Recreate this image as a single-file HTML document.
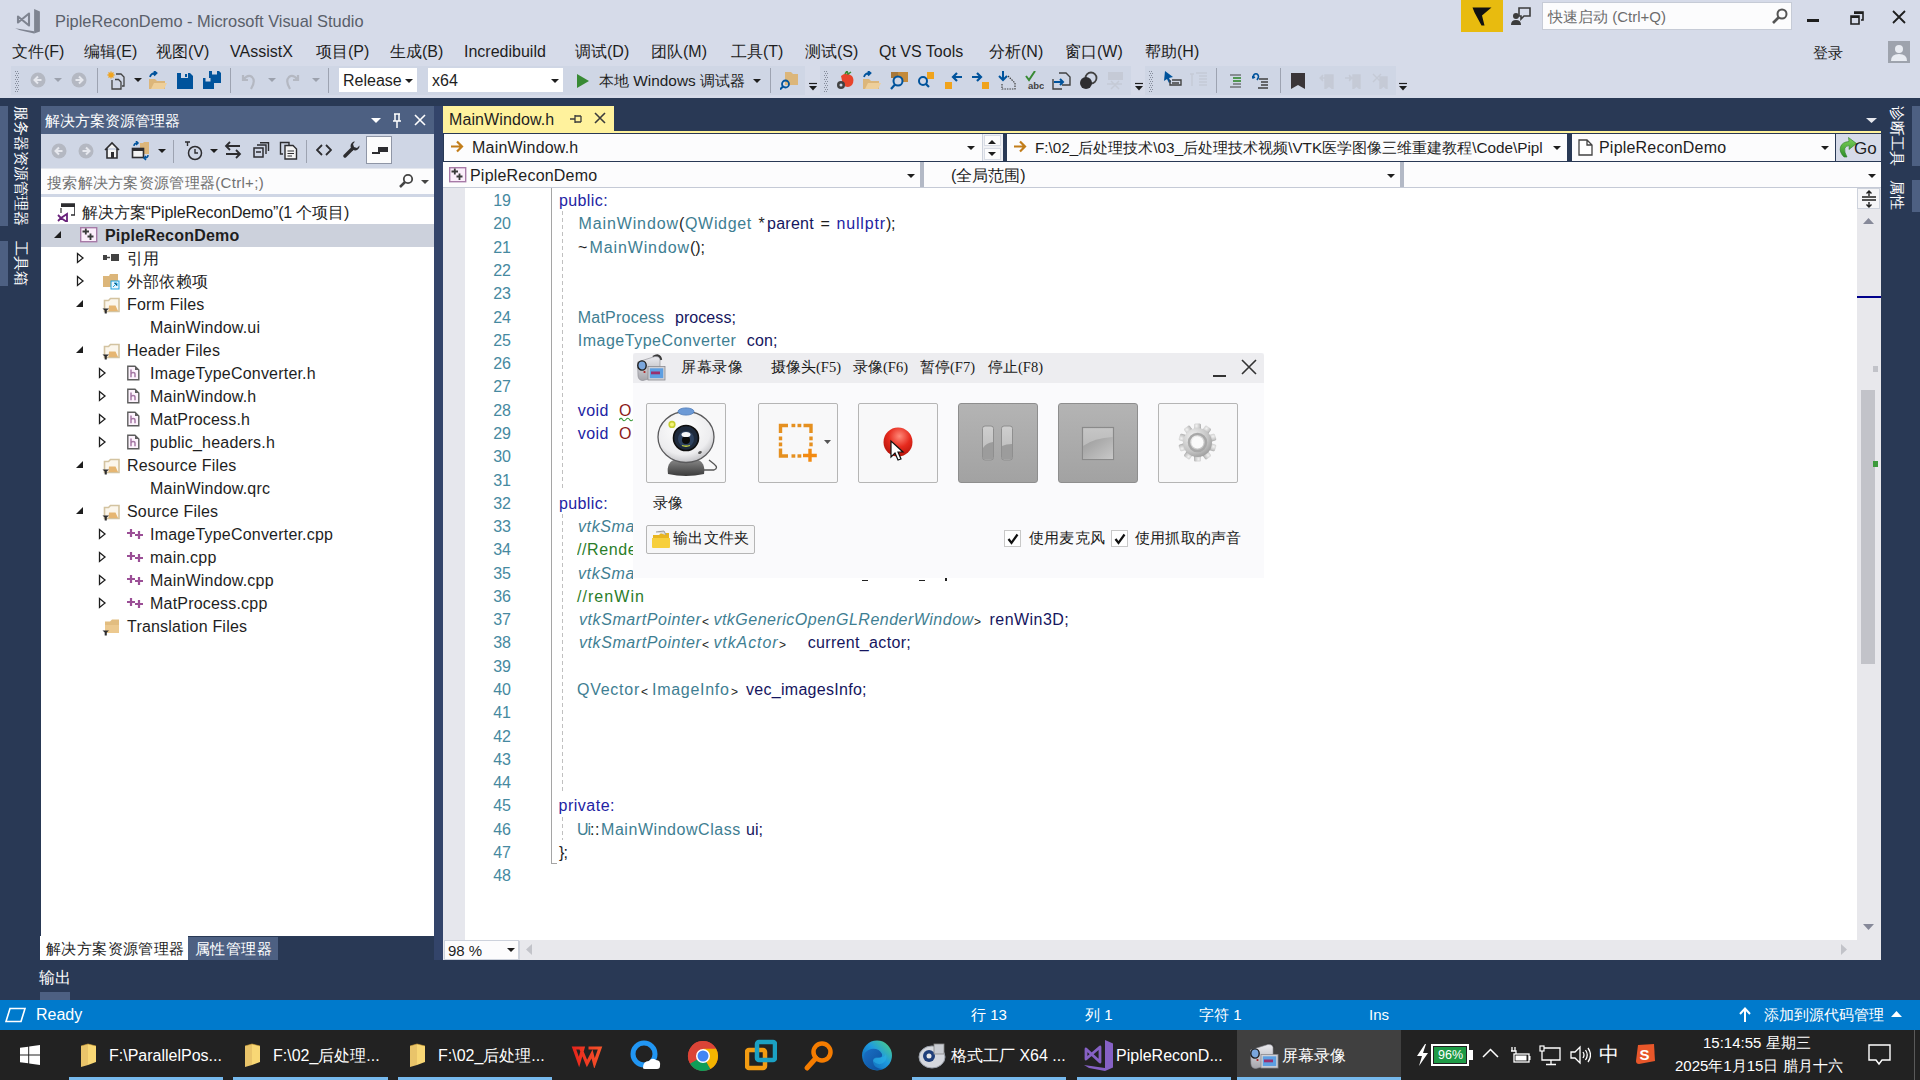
<!DOCTYPE html>
<html><head><meta charset="utf-8">
<style>
*{margin:0;padding:0;box-sizing:border-box}
html,body{width:1920px;height:1080px;overflow:hidden}
body{position:relative;background:#293955;font-family:"Liberation Sans",sans-serif;font-size:16px;color:#1e1e1e}
.a{position:absolute}
.t{position:absolute;white-space:nowrap;line-height:1}
#title{left:0;top:0;width:1920px;height:36px;background:#d6dbe9}
#menu{left:0;top:36px;width:1920px;height:29px;background:#d6dbe9}
#tb{left:0;top:65px;width:1920px;height:33px;background:#d6dbe9}
#status{left:0;top:1000px;width:1920px;height:30px;background:#007acc;color:#fff}
#task{left:0;top:1030px;width:1920px;height:50px;background:#222;color:#fff}
</style></head><body>

<div id="title" class="a">
  <svg class="a" style="left:8px;top:4px" width="40" height="32" viewBox="0 0 40 32"><polygon points="26.1,5 31.9,7.4 31.9,27.6 26.1,29.6" fill="#7f8491"/><polygon points="7.1,24.2 26.1,27.2 26.1,29.6 12,26.2" fill="#7f8491"/><path d="M10 12.5 L21 21.5 L21 9.5 L10 18.5 Z" fill="none" stroke="#7f8491" stroke-width="2.1" stroke-linejoin="round"/></svg>
  <div class="t" style="left:55px;top:13px;font-size:16.4px;color:#5a5f6a">PipleReconDemo - Microsoft Visual Studio</div>
  <div class="a" style="left:1461px;top:0;width:42px;height:32px;background:#e8bb0f"></div>
  <svg class="a" style="left:1471px;top:6px" width="22" height="22" viewBox="0 0 22 22"><path d="M1.5 1.5H20.5L11 9.5L13.5 19.5H10.5L3.5 6.5Z" fill="#111"/></svg>
  <svg class="a" style="left:1510px;top:5px" width="22" height="22" viewBox="0 0 22 22"><path d="M9 3 H20 V11 H14 L11 14 V11 H9 Z" fill="none" stroke="#3c3c3c" stroke-width="1.6"/><circle cx="6" cy="11" r="3" fill="#3c3c3c"/><path d="M1 20 Q1 15 6 15 Q11 15 11 20 Z" fill="#3c3c3c"/></svg>
  <div class="a" style="left:1542px;top:2px;width:250px;height:28px;background:#fcfcfd;border:1px solid #c6cbd6"></div>
  <div class="t" style="left:1548px;top:9px;font-size:15px;color:#6d6d6d">快速启动 (Ctrl+Q)</div>
  <svg class="a" style="left:1771px;top:7px" width="18" height="18" viewBox="0 0 18 18"><circle cx="11" cy="7" r="4.5" fill="none" stroke="#555" stroke-width="2"/><path d="M8 10 L2 16" stroke="#555" stroke-width="2.6"/></svg>
  <div class="a" style="left:1807px;top:19px;width:12px;height:3px;background:#1e1e1e"></div>
  <svg class="a" style="left:1850px;top:11px" width="14" height="14" viewBox="0 0 14 14"><path d="M4 1 H13 V9 H11 M1 5 H9 V13 H1 Z M1 5.5 H9" fill="none" stroke="#1e1e1e" stroke-width="1.6"/><rect x="1" y="5" width="8" height="2" fill="#1e1e1e"/><rect x="4" y="1" width="9" height="2" fill="#1e1e1e"/></svg>
  <svg class="a" style="left:1892px;top:10px" width="14" height="14" viewBox="0 0 14 14"><path d="M1 1 L13 13 M13 1 L1 13" stroke="#1e1e1e" stroke-width="1.8"/></svg>
</div>
<div id="menu" class="a">
  <div class="t" style="left:12px;top:8px">文件(F)</div>
  <div class="t" style="left:84px;top:8px">编辑(E)</div>
  <div class="t" style="left:156px;top:8px">视图(V)</div>
  <div class="t" style="left:230px;top:8px">VAssistX</div>
  <div class="t" style="left:316px;top:8px">项目(P)</div>
  <div class="t" style="left:390px;top:8px">生成(B)</div>
  <div class="t" style="left:464px;top:8px">Incredibuild</div>
  <div class="t" style="left:575px;top:8px">调试(D)</div>
  <div class="t" style="left:651px;top:8px">团队(M)</div>
  <div class="t" style="left:731px;top:8px">工具(T)</div>
  <div class="t" style="left:805px;top:8px">测试(S)</div>
  <div class="t" style="left:879px;top:8px">Qt VS Tools</div>
  <div class="t" style="left:989px;top:8px">分析(N)</div>
  <div class="t" style="left:1065px;top:8px">窗口(W)</div>
  <div class="t" style="left:1145px;top:8px">帮助(H)</div>
  <div class="t" style="left:1813px;top:9px;font-size:15px">登录</div>
  <svg class="a" style="left:1888px;top:5px" width="22" height="22" viewBox="0 0 22 22"><rect x="0" y="0" width="22" height="22" fill="#9ea3ad"/><circle cx="11" cy="8" r="4" fill="#e9ecf2"/><path d="M3 20 Q3 13 11 13 Q19 13 19 20 Z" fill="#e9ecf2"/></svg>
</div>
<div id="tb" class="a"><div class="a" style="left:11px;top:1px;width:794px;height:29px;background:#cfd6e5"></div>
<div class="a" style="left:820px;top:1px;width:311px;height:29px;background:#cfd6e5"></div>
<div class="a" style="left:1145px;top:1px;width:251px;height:29px;background:#cfd6e5"></div>
<svg class="a" style="left:14px;top:5px" width="5" height="22"><rect x="1" y="1" width="1" height="1" fill="#858c9b"/><rect x="3" y="1" width="1" height="1" fill="#858c9b"/><rect x="2" y="3" width="1" height="1" fill="#858c9b"/><rect x="4" y="3" width="1" height="1" fill="#858c9b"/><rect x="1" y="5" width="1" height="1" fill="#858c9b"/><rect x="3" y="5" width="1" height="1" fill="#858c9b"/><rect x="2" y="7" width="1" height="1" fill="#858c9b"/><rect x="4" y="7" width="1" height="1" fill="#858c9b"/><rect x="1" y="9" width="1" height="1" fill="#858c9b"/><rect x="3" y="9" width="1" height="1" fill="#858c9b"/><rect x="2" y="11" width="1" height="1" fill="#858c9b"/><rect x="4" y="11" width="1" height="1" fill="#858c9b"/><rect x="1" y="13" width="1" height="1" fill="#858c9b"/><rect x="3" y="13" width="1" height="1" fill="#858c9b"/><rect x="2" y="15" width="1" height="1" fill="#858c9b"/><rect x="4" y="15" width="1" height="1" fill="#858c9b"/><rect x="1" y="17" width="1" height="1" fill="#858c9b"/><rect x="3" y="17" width="1" height="1" fill="#858c9b"/><rect x="2" y="19" width="1" height="1" fill="#858c9b"/><rect x="4" y="19" width="1" height="1" fill="#858c9b"/><rect x="1" y="21" width="1" height="1" fill="#858c9b"/><rect x="3" y="21" width="1" height="1" fill="#858c9b"/></svg>
<svg class="a" style="left:823px;top:5px" width="5" height="22"><rect x="1" y="1" width="1" height="1" fill="#858c9b"/><rect x="3" y="1" width="1" height="1" fill="#858c9b"/><rect x="2" y="3" width="1" height="1" fill="#858c9b"/><rect x="4" y="3" width="1" height="1" fill="#858c9b"/><rect x="1" y="5" width="1" height="1" fill="#858c9b"/><rect x="3" y="5" width="1" height="1" fill="#858c9b"/><rect x="2" y="7" width="1" height="1" fill="#858c9b"/><rect x="4" y="7" width="1" height="1" fill="#858c9b"/><rect x="1" y="9" width="1" height="1" fill="#858c9b"/><rect x="3" y="9" width="1" height="1" fill="#858c9b"/><rect x="2" y="11" width="1" height="1" fill="#858c9b"/><rect x="4" y="11" width="1" height="1" fill="#858c9b"/><rect x="1" y="13" width="1" height="1" fill="#858c9b"/><rect x="3" y="13" width="1" height="1" fill="#858c9b"/><rect x="2" y="15" width="1" height="1" fill="#858c9b"/><rect x="4" y="15" width="1" height="1" fill="#858c9b"/><rect x="1" y="17" width="1" height="1" fill="#858c9b"/><rect x="3" y="17" width="1" height="1" fill="#858c9b"/><rect x="2" y="19" width="1" height="1" fill="#858c9b"/><rect x="4" y="19" width="1" height="1" fill="#858c9b"/><rect x="1" y="21" width="1" height="1" fill="#858c9b"/><rect x="3" y="21" width="1" height="1" fill="#858c9b"/></svg>
<svg class="a" style="left:1148px;top:5px" width="5" height="22"><rect x="1" y="1" width="1" height="1" fill="#858c9b"/><rect x="3" y="1" width="1" height="1" fill="#858c9b"/><rect x="2" y="3" width="1" height="1" fill="#858c9b"/><rect x="4" y="3" width="1" height="1" fill="#858c9b"/><rect x="1" y="5" width="1" height="1" fill="#858c9b"/><rect x="3" y="5" width="1" height="1" fill="#858c9b"/><rect x="2" y="7" width="1" height="1" fill="#858c9b"/><rect x="4" y="7" width="1" height="1" fill="#858c9b"/><rect x="1" y="9" width="1" height="1" fill="#858c9b"/><rect x="3" y="9" width="1" height="1" fill="#858c9b"/><rect x="2" y="11" width="1" height="1" fill="#858c9b"/><rect x="4" y="11" width="1" height="1" fill="#858c9b"/><rect x="1" y="13" width="1" height="1" fill="#858c9b"/><rect x="3" y="13" width="1" height="1" fill="#858c9b"/><rect x="2" y="15" width="1" height="1" fill="#858c9b"/><rect x="4" y="15" width="1" height="1" fill="#858c9b"/><rect x="1" y="17" width="1" height="1" fill="#858c9b"/><rect x="3" y="17" width="1" height="1" fill="#858c9b"/><rect x="2" y="19" width="1" height="1" fill="#858c9b"/><rect x="4" y="19" width="1" height="1" fill="#858c9b"/><rect x="1" y="21" width="1" height="1" fill="#858c9b"/><rect x="3" y="21" width="1" height="1" fill="#858c9b"/></svg>
<svg class="a" style="left:30px;top:7px" width="16" height="16" viewBox="0 0 16 16"><circle cx="8" cy="8" r="7.5" fill="#b4b8c2"/><path d="M11.5 8 H5 M8 4.5 L4.5 8 L8 11.5" stroke="#e6e8ee" stroke-width="2" fill="none"/></svg>
<svg class="a" style="left:54px;top:13px" width="8" height="4"><path d="M0 0 H8 L4 4Z" fill="#9ca1ad"/></svg>
<svg class="a" style="left:71px;top:7px" width="16" height="16" viewBox="0 0 16 16"><circle cx="8" cy="8" r="7.5" fill="#b4b8c2"/><path d="M4.5 8 H11 M8 4.5 L11.5 8 L8 11.5" stroke="#e6e8ee" stroke-width="2" fill="none"/></svg>
<div class="a" style="left:97px;top:3px;width:1px;height:25px;background:#9da3b1"></div>
<svg class="a" style="left:107px;top:6px" width="19" height="19" viewBox="0 0 19 19"><path d="M4 0.5V7.5M0.5 4H7.5M1.5 1.5L6.5 6.5M6.5 1.5L1.5 6.5" stroke="#f0a31c" stroke-width="1.3"/><path d="M9 3H14L17 6V15H15" fill="none" stroke="#424242" stroke-width="1.3"/><path d="M5 9V18H14V11L11.5 8.5H8" fill="none" stroke="#424242" stroke-width="1.3"/></svg>
<svg class="a" style="left:134px;top:13px" width="8" height="4"><path d="M0 0 H8 L4 4Z" fill="#1e1e1e"/></svg>
<svg class="a" style="left:148px;top:6px" width="20" height="19" viewBox="0 0 20 19"><path d="M1 8 H7 L9 10 H17 V18 H1 Z" fill="#dcb67a"/><path d="M3 18 L6 12 H19 L16 18 Z" fill="#eecf9a"/><path d="M2 6 Q3 2 8 2 M6 0 L8.5 2 L6 4.5" stroke="#00539c" stroke-width="1.8" fill="none"/></svg>
<svg class="a" style="left:177px;top:8px" width="16" height="16" viewBox="0 0 16 16"><path d="M0 0 H13 L16 3 V16 H0 Z" fill="#00539c"/><rect x="4" y="0" width="7" height="5" fill="#cfd6e5"/><rect x="8" y="1" width="2" height="3" fill="#00539c"/></svg>
<svg class="a" style="left:203px;top:6px" width="18" height="18" viewBox="0 0 18 18"><path d="M6 0 H16 L18 2 V12 H6 Z" fill="#00539c"/><rect x="9" y="0" width="5" height="3.5" fill="#cfd6e5"/><path d="M0 7 H9 L11 9 V18 H0 Z" fill="#00539c"/><rect x="2.5" y="7" width="5" height="3.5" fill="#cfd6e5"/></svg>
<div class="a" style="left:230px;top:3px;width:1px;height:25px;background:#9da3b1"></div>
<svg class="a" style="left:240px;top:7px" width="17" height="18" viewBox="0 0 17 18"><path d="M3 3 V8 H8 M3.5 7.5 Q8 2 12 5 Q16 9 11 17" stroke="#b4b8c2" stroke-width="2.2" fill="none"/></svg>
<svg class="a" style="left:268px;top:13px" width="8" height="4"><path d="M0 0 H8 L4 4Z" fill="#9ca1ad"/></svg>
<svg class="a" style="left:284px;top:7px" width="17" height="18" viewBox="0 0 17 18"><path d="M14 3 V8 H9 M13.5 7.5 Q9 2 5 5 Q1 9 6 17" stroke="#b4b8c2" stroke-width="2.2" fill="none"/></svg>
<svg class="a" style="left:312px;top:13px" width="8" height="4"><path d="M0 0 H8 L4 4Z" fill="#9ca1ad"/></svg>
<div class="a" style="left:328px;top:3px;width:1px;height:25px;background:#9da3b1"></div>
<div class="a" style="left:338px;top:2px;width:80px;height:26px;background:#fff;border:1px solid #cfd6e5"></div>
<div class="t" style="left:343px;top:8px;font-size:16px;color:#1e1e1e">Release</div>
<svg class="a" style="left:405px;top:14px" width="8" height="4"><path d="M0 0 H8 L4 4Z" fill="#1e1e1e"/></svg>
<div class="a" style="left:427px;top:2px;width:137px;height:26px;background:#fff;border:1px solid #cfd6e5"></div>
<div class="t" style="left:432px;top:8px;font-size:16px;color:#1e1e1e">x64</div>
<svg class="a" style="left:551px;top:14px" width="8" height="4"><path d="M0 0 H8 L4 4Z" fill="#1e1e1e"/></svg>
<svg class="a" style="left:577px;top:9px" width="12" height="14" viewBox="0 0 12 14"><path d="M0 0 L12 7 L0 14 Z" fill="#388a34"/></svg>
<div class="t" style="left:599px;top:8px;font-size:15.4px;color:#1e1e1e">本地 Windows 调试器</div>
<svg class="a" style="left:753px;top:14px" width="8" height="4"><path d="M0 0 H8 L4 4Z" fill="#1e1e1e"/></svg>
<div class="a" style="left:770px;top:3px;width:1px;height:25px;background:#9da3b1"></div>
<svg class="a" style="left:780px;top:6px" width="19" height="19" viewBox="0 0 19 19"><path d="M5 3 V1 H11 L13 3 H18 V14 H5 Z" fill="#dcb67a"/><circle cx="5.5" cy="13" r="3.5" fill="none" stroke="#00539c" stroke-width="1.8"/><path d="M3 15.5 L0 18.5" stroke="#00539c" stroke-width="2"/></svg>
<svg class="a" style="left:808px;top:17px" width="10" height="10"><path d="M1 1.5H9" stroke="#1e1e1e" stroke-width="1.2"/><path d="M1 4H9L5 8.5Z" fill="#1e1e1e"/></svg>
<svg class="a" style="left:836px;top:6px" width="19" height="19" viewBox="0 0 19 19"><path d="M5 5 Q10 0 16 5 Q19 9 16 14 Q12 18 7 14 Z" fill="#e8452c"/><path d="M9 3 L11 0 L12 3 L15 1" stroke="#388a34" stroke-width="1.5" fill="none"/><circle cx="5" cy="14" r="4" fill="#424242"/><circle cx="5" cy="14" r="1.5" fill="#cfd6e5"/></svg>
<svg class="a" style="left:862px;top:6px" width="20" height="19" viewBox="0 0 20 19"><path d="M1 8 H7 L9 10 H17 V18 H1 Z" fill="#dcb67a"/><path d="M3 18 L6 12 H19 L16 18 Z" fill="#eecf9a"/><path d="M2 6 Q3 2 8 2 M6 0 L8.5 2 L6 4.5" stroke="#00539c" stroke-width="1.8" fill="none"/></svg>
<svg class="a" style="left:890px;top:6px" width="19" height="19" viewBox="0 0 19 19"><rect x="6" y="1" width="12" height="10" fill="#c48a3a"/><rect x="1" y="1" width="7" height="6" fill="#a8783a"/><circle cx="8" cy="10" r="4.5" fill="#cfd6e5" stroke="#00539c" stroke-width="2"/><path d="M5 13.5 L1 18" stroke="#00539c" stroke-width="2.2"/></svg>
<svg class="a" style="left:916px;top:6px" width="19" height="19" viewBox="0 0 19 19"><rect x="11" y="1" width="7" height="7" fill="#f0a31c"/><circle cx="7" cy="10" r="4" fill="none" stroke="#00539c" stroke-width="2"/><path d="M10 13 L13 16" stroke="#00539c" stroke-width="2.2"/></svg>
<svg class="a" style="left:944px;top:6px" width="19" height="19" viewBox="0 0 19 19"><rect x="1" y="11" width="7" height="7" fill="#f0a31c"/><path d="M18 6 H9 M13 2 L9 6 L13 10" stroke="#00539c" stroke-width="2.2" fill="none"/></svg>
<svg class="a" style="left:971px;top:6px" width="19" height="19" viewBox="0 0 19 19"><rect x="11" y="11" width="7" height="7" fill="#f0a31c"/><path d="M1 6 H10 M6 2 L10 6 L6 10" stroke="#00539c" stroke-width="2.2" fill="none"/></svg>
<svg class="a" style="left:998px;top:6px" width="19" height="19" viewBox="0 0 19 19"><path d="M5 0 V9 M1 5 L5 9 L9 5" stroke="#00539c" stroke-width="2" fill="none"/><path d="M10 5 L17 12 V18 H4 V12" stroke="#424242" stroke-width="1.2" fill="none" stroke-dasharray="1.5 1"/></svg>
<svg class="a" style="left:1025px;top:6px" width="19" height="19" viewBox="0 0 19 19"><path d="M1 5 L4 9 L10 0" stroke="#388a34" stroke-width="2" fill="none"/><text x="3" y="18" font-size="9.5" font-family="Liberation Sans" font-weight="bold" fill="#424242">abc</text></svg>
<svg class="a" style="left:1052px;top:6px" width="19" height="19" viewBox="0 0 19 19"><path d="M7 2 H14 L18 6 V14 H10 M1 8 V18 H10" stroke="#424242" stroke-width="1.4" fill="none"/><path d="M2 11 H11 M8 8 L11 11 L8 14" stroke="#00539c" stroke-width="2" fill="none"/></svg>
<svg class="a" style="left:1079px;top:6px" width="19" height="19" viewBox="0 0 19 19"><circle cx="12" cy="7" r="5.5" fill="none" stroke="#424242" stroke-width="1.8"/><circle cx="7" cy="12" r="6" fill="#2d2d30"/></svg>
<svg class="a" style="left:1105px;top:6px" width="19" height="19" viewBox="0 0 19 19"><rect x="3" y="1" width="15" height="8" fill="#c5cad6"/><path d="M2 13 L17 13 M6 10 L14 18 M14 10 L6 18" stroke="#c5cad6" stroke-width="1.5"/></svg>
<svg class="a" style="left:1134px;top:17px" width="10" height="10"><path d="M1 1.5H9" stroke="#1e1e1e" stroke-width="1.2"/><path d="M1 4H9L5 8.5Z" fill="#1e1e1e"/></svg>
<svg class="a" style="left:1163px;top:6px" width="19" height="19" viewBox="0 0 19 19"><path d="M2 0 L10 6 L6 7 L8 11 L6 12 L4 8 L1 10 Z" fill="#00539c"/><path d="M7 9 V14 H18 V9 H9 M9 12 H16" stroke="#424242" stroke-width="1.4" fill="none"/></svg>
<svg class="a" style="left:1189px;top:6px" width="19" height="19" viewBox="0 0 19 19"><path d="M7 2 H18 M10 5 H18 M10 8 H18 M10 11 H18 M10 14 H18 M1 3 H5 M3 3 V15" stroke="#c5cad6" stroke-width="1.4" fill="none"/></svg>
<div class="a" style="left:1216px;top:3px;width:1px;height:25px;background:#9da3b1"></div>
<svg class="a" style="left:1227px;top:8px" width="16" height="16" viewBox="0 0 16 16"><path d="M3 2 H14 M6 5 H14 M6 8 H14 M6 11 H14 M3 14 H14" stroke="#424242" stroke-width="1.2"/><path d="M6 5 H14 M6 8 H14" stroke="#3e9a3c" stroke-width="1.6"/></svg>
<svg class="a" style="left:1252px;top:8px" width="16" height="16" viewBox="0 0 16 16"><path d="M7 6 H16 M9 9 H16 M9 12 H16 M6 15 H16" stroke="#424242" stroke-width="1.4"/><path d="M1 4 Q2 0 5 1 Q8 3 5 7 M0 3 L1 5 L3 4" stroke="#00539c" stroke-width="1.6" fill="none"/></svg>
<div class="a" style="left:1280px;top:3px;width:1px;height:25px;background:#9da3b1"></div>
<svg class="a" style="left:1291px;top:8px" width="14" height="16" viewBox="0 0 14 16"><path d="M0 0 H14 V16 L7 12 L0 16 Z" fill="#3a3538"/></svg>
<svg class="a" style="left:1319px;top:8px" width="16" height="16" viewBox="0 0 16 16"><path d="M6 2 H14 V16 L10 13 L6 16 Z M7 5 H1 M4 2 L1 5 L4 8" fill="#c5cad6" stroke="#c5cad6" stroke-width="1.4"/></svg>
<svg class="a" style="left:1345px;top:8px" width="16" height="16" viewBox="0 0 16 16"><path d="M8 2 H15 V16 L11.5 13 L8 16 Z M0 5 H7 M4 2 L7 5 L4 8" fill="#c5cad6" stroke="#c5cad6" stroke-width="1.4"/></svg>
<svg class="a" style="left:1372px;top:8px" width="16" height="16" viewBox="0 0 16 16"><path d="M8 4 H15 V16 L11.5 13 L8 16 Z M1 1 L9 9 M9 1 L1 9" fill="#c5cad6" stroke="#c5cad6" stroke-width="1.4"/></svg>
<svg class="a" style="left:1398px;top:17px" width="10" height="10"><path d="M1 1.5H9" stroke="#1e1e1e" stroke-width="1.2"/><path d="M1 4H9L5 8.5Z" fill="#1e1e1e"/></svg></div>
<div class="a" style="left:0;top:106px;width:8px;height:120px;background:#4d6082"></div>
<div class="a" style="left:0;top:241px;width:8px;height:45px;background:#4d6082"></div>
<div class="t" style="left:14px;top:106px;width:14px;transform-origin:0 0;transform:translate(14px,0) rotate(90deg);font-size:14.5px;color:#fff">服务器资源管理器</div>
<div class="t" style="left:14px;top:241px;transform-origin:0 0;transform:translate(14px,0) rotate(90deg);font-size:14.5px;color:#fff">工具箱</div>
<div class="a" style="left:41px;top:106px;width:393px;height:830px;background:#fff"><div class="a" style="left:0;top:0;width:393px;height:28px;background:#4d6082"></div>
<div class="t" style="left:4px;top:7px;font-size:15px;color:#fff">解决方案资源管理器</div>
<svg class="a" style="left:330px;top:12px" width="10" height="5"><path d="M0 0H10L5 5Z" fill="#fff"/></svg>
<svg class="a" style="left:350px;top:7px" width="12" height="15"><path d="M3 1H9M4 1V8M8 1V8M2 8H10M6 8V15" stroke="#fff" stroke-width="1.5" fill="none"/></svg>
<svg class="a" style="left:373px;top:8px" width="12" height="12"><path d="M1 1L11 11M11 1L1 11" stroke="#fff" stroke-width="1.6"/></svg>
<div class="a" style="left:0;top:28px;width:393px;height:34px;background:#cfd6e5"></div>
<div class="a" style="left:0;top:62px;width:393px;height:26px;background:#fcfcfd;border-top:1px solid #e4e7ee"></div><div class="a" style="left:0;top:88px;width:393px;height:3px;background:#cfd6e5"></div>
<div class="t" style="left:6px;top:69px;font-size:15px;letter-spacing:0.3px;color:#717171">搜索解决方案资源管理器(Ctrl+;)</div>
<svg class="a" style="left:357px;top:67px" width="16" height="16"><circle cx="10" cy="6" r="4.2" fill="none" stroke="#444" stroke-width="1.8"/><path d="M7 9L2 14" stroke="#444" stroke-width="2.5"/></svg>
<svg class="a" style="left:380px;top:74px" width="8" height="4"><path d="M0 0H8L4 4Z" fill="#444"/></svg>
<div class="a" style="left:0;top:91px;width:393px;height:739px;background:#fff"></div></div>
<div class="a" style="left:40px;top:936px;width:148px;height:24px;background:#fff"></div>
<div class="t" style="left:46px;top:941px;font-size:15px;letter-spacing:0.4px;color:#1e1e1e">解决方案资源管理器</div>
<div class="a" style="left:188px;top:937px;width:90px;height:23px;background:#4d6082"></div>
<div class="t" style="left:195px;top:941px;font-size:15px;letter-spacing:0.4px;color:#fff">属性管理器</div>
<div class="t" style="left:39px;top:970px;font-size:16px;color:#fff">输出</div>
<div class="a" style="left:40px;top:992px;width:30px;height:8px;background:#4d6082"></div>
<div class="a" style="left:1912px;top:106px;width:8px;height:60px;background:#4d6082"></div>
<div class="a" style="left:1912px;top:180px;width:8px;height:32px;background:#4d6082"></div>
<div class="t" style="left:1890px;top:106px;transform-origin:0 0;transform:translate(14px,0) rotate(90deg);font-size:14.5px;color:#fff">诊断工具</div>
<div class="t" style="left:1890px;top:180px;transform-origin:0 0;transform:translate(14px,0) rotate(90deg);font-size:14.5px;color:#fff">属性</div>
<svg class="a" style="left:51px;top:143px" width="16" height="16" viewBox="0 0 16 16"><circle cx="8" cy="8" r="7.5" fill="#b4b8c2"/><path d="M11.5 8H5M8 4.5L4.5 8L8 11.5" stroke="#e6e8ee" stroke-width="2" fill="none"/></svg>
<svg class="a" style="left:78px;top:143px" width="16" height="16" viewBox="0 0 16 16"><circle cx="8" cy="8" r="7.5" fill="#b4b8c2"/><path d="M4.5 8H11M8 4.5L11.5 8L8 11.5" stroke="#e6e8ee" stroke-width="2" fill="none"/></svg>
<svg class="a" style="left:103px;top:141px" width="18" height="18" viewBox="0 0 18 18"><path d="M2 9L9 2L16 9M4 7V17H14V7" fill="#f3f3f3" stroke="#2d2d30" stroke-width="1.6"/><rect x="8" y="11" width="3" height="6" fill="#2d2d30"/></svg>
<svg class="a" style="left:131px;top:141px" width="20" height="20" viewBox="0 0 20 20"><path d="M9 2H12L13 1H18V13H9Z" fill="#dcb67a"/><rect x="1.5" y="7.5" width="11" height="9" fill="#f3f3f3" stroke="#2d2d30" stroke-width="1.6"/><rect x="1.5" y="7.5" width="11" height="2.5" fill="#2d2d30"/><path d="M3 5Q3 2 6.5 2M5 0L7 2L5 4M17 14Q17 17 13.5 17M15 15L13 17L15 19" stroke="#00539c" stroke-width="1.5" fill="none"/></svg>
<svg class="a" style="left:158px;top:149px" width="8" height="4" viewBox="0 0 8 4"><path d="M0 0H8L4 4Z" fill="#1e1e1e"/></svg>
<div class="a" style="left:173px;top:140px;width:1px;height:23px;background:#9da3b1"></div>
<svg class="a" style="left:184px;top:141px" width="20" height="20" viewBox="0 0 20 20"><path d="M1 1H6M3.5 1V5" stroke="#2d2d30" stroke-width="1.4"/><circle cx="11" cy="12" r="6.5" fill="none" stroke="#2d2d30" stroke-width="1.5"/><path d="M11 8V12H14" stroke="#2d2d30" stroke-width="1.4" fill="none"/></svg>
<svg class="a" style="left:210px;top:149px" width="8" height="4" viewBox="0 0 8 4"><path d="M0 0H8L4 4Z" fill="#1e1e1e"/></svg>
<svg class="a" style="left:224px;top:141px" width="18" height="18" viewBox="0 0 18 18"><path d="M16 5H3M6 1L2 5L6 9M2 13H15M12 9L16 13L12 17" stroke="#2d2d30" stroke-width="1.8" fill="none"/></svg>
<svg class="a" style="left:253px;top:142px" width="17" height="17" viewBox="0 0 17 17"><rect x="1" y="6" width="9" height="9" fill="none" stroke="#2d2d30" stroke-width="1.5"/><path d="M4 3H13V12M7 0.8H15.5V9" stroke="#2d2d30" stroke-width="1.4" fill="none"/><path d="M3 10H8" stroke="#2d2d30" stroke-width="1.5"/></svg>
<svg class="a" style="left:279px;top:141px" width="19" height="19" viewBox="0 0 19 19"><path d="M4 13H1.5V1.5H10V4" fill="none" stroke="#2d2d30" stroke-width="1.4"/><path d="M6 4.5H14L17.5 8V18H6Z" fill="#f3f3f3" stroke="#2d2d30" stroke-width="1.4"/><path d="M8.5 10H15M8.5 12.5H15M8.5 15H13" stroke="#2d2d30" stroke-width="1.1"/></svg>
<div class="a" style="left:306px;top:140px;width:1px;height:23px;background:#9da3b1"></div>
<svg class="a" style="left:316px;top:144px" width="16" height="12" viewBox="0 0 16 12"><path d="M6 1L1 6L6 11M10 1L15 6L10 11" stroke="#2d2d30" stroke-width="1.8" fill="none"/></svg>
<svg class="a" style="left:343px;top:141px" width="18" height="18" viewBox="0 0 18 18"><path d="M16.5 4.5A4.5 4.5 0 1 1 12 0.5L10 3L11 6L14 7L16.5 4.5Z" fill="#2d2d30"/><path d="M9 8L2 15" stroke="#2d2d30" stroke-width="3.4" stroke-linecap="round"/></svg>
<div class="a" style="left:366px;top:136px;width:26px;height:28px;background:#fcfcfc;border:1px solid #8f96a6"></div>
<div class="a" style="left:372px;top:152px;width:8px;height:2px;background:#2d2d30"></div>
<div class="a" style="left:378px;top:147px;width:10px;height:5px;background:#2d2d30"></div>
<svg class="a" style="left:57px;top:203px" width="18" height="19" viewBox="0 0 18 19"><path d="M4 1H18V12H14" fill="none" stroke="#2d2d30" stroke-width="1.6"/><rect x="4" y="1" width="14" height="3" fill="#2d2d30"/><path d="M4 5V10" stroke="#2d2d30" stroke-width="1.2"/><path d="M1 12L4 15L1 18M10 11V19L4 15Z" fill="none" stroke="#68217a" stroke-width="1.8"/></svg>
<div class="t" style="left:82px;top:205px;font-size:16px;letter-spacing:-0.15px;color:#1e1e1e;">解决方案“PipleReconDemo”(1 个项目)</div>
<div class="a" style="left:41px;top:224px;width:393px;height:23px;background:#ccd1dc"></div>
<svg class="a" style="left:53px;top:230px" width="10" height="10" viewBox="0 0 10 10"><path d="M8 1V8H1Z" fill="#1e1e1e"/></svg>
<svg class="a" style="left:80px;top:226px" width="18" height="19" viewBox="0 0 18 19"><rect x="0.7" y="1.7" width="16" height="14" fill="#fbeefb" stroke="#a77aa7" stroke-width="1.4"/><path d="M2.5 5.5H9M5.8 2.5V8.5M7.5 10.5H13.5M10.5 7.5V14" stroke="#3a3a3a" stroke-width="1.8"/></svg>
<div class="t" style="left:105px;top:228px;font-size:16px;letter-spacing:0.2px;color:#1e1e1e;font-weight:bold;">PipleReconDemo</div>
<svg class="a" style="left:76px;top:252px" width="9" height="12" viewBox="0 0 9 12"><path d="M1.5 1.5L7 6L1.5 10.5Z" fill="none" stroke="#1e1e1e" stroke-width="1.3"/></svg>
<svg class="a" style="left:102px;top:249px" width="18" height="19" viewBox="0 0 18 19"><rect x="1" y="6" width="4" height="5" fill="#424242"/><path d="M5 8.5H8" stroke="#424242" stroke-width="1.5"/><rect x="9" y="5" width="8" height="7" fill="#424242"/></svg>
<div class="t" style="left:127px;top:251px;font-size:16px;letter-spacing:0.2px;color:#1e1e1e;">引用</div>
<svg class="a" style="left:76px;top:275px" width="9" height="12" viewBox="0 0 9 12"><path d="M1.5 1.5L7 6L1.5 10.5Z" fill="none" stroke="#1e1e1e" stroke-width="1.3"/></svg>
<svg class="a" style="left:102px;top:272px" width="18" height="19" viewBox="0 0 18 19"><path d="M1 4H7L8 2H16V15H1Z" fill="#dcb67a"/><rect x="9" y="9" width="8" height="8" fill="#e8f4fb" stroke="#1ba1e2" stroke-width="1"/><path d="M11 15L15 11M12 11H15V14" stroke="#1ba1e2" stroke-width="1"/></svg>
<div class="t" style="left:127px;top:274px;font-size:16px;letter-spacing:0.2px;color:#1e1e1e;">外部依赖项</div>
<svg class="a" style="left:75px;top:299px" width="10" height="10" viewBox="0 0 10 10"><path d="M8 1V8H1Z" fill="#1e1e1e"/></svg>
<svg class="a" style="left:102px;top:295px" width="18" height="19" viewBox="0 0 18 19"><path d="M2.5 5.5H6.5L8.5 3.5H17V16.5H2.5Z" fill="#fbf6ec" stroke="#d3c3a0" stroke-width="1.6"/><path d="M7 10.5H13.5L16 16H6.5Z" fill="#e6b672"/><path d="M0.5 13.5H7L4.8 15.5V18.5H2.7V15.5Z" fill="#2d2d30"/></svg>
<div class="t" style="left:127px;top:297px;font-size:16px;letter-spacing:0.2px;color:#1e1e1e;">Form Files</div>
<div class="t" style="left:150px;top:320px;font-size:16px;letter-spacing:0.2px;color:#1e1e1e;">MainWindow.ui</div>
<svg class="a" style="left:75px;top:345px" width="10" height="10" viewBox="0 0 10 10"><path d="M8 1V8H1Z" fill="#1e1e1e"/></svg>
<svg class="a" style="left:102px;top:341px" width="18" height="19" viewBox="0 0 18 19"><path d="M2.5 5.5H6.5L8.5 3.5H17V16.5H2.5Z" fill="#fbf6ec" stroke="#d3c3a0" stroke-width="1.6"/><path d="M7 10.5H13.5L16 16H6.5Z" fill="#e6b672"/><path d="M0.5 13.5H7L4.8 15.5V18.5H2.7V15.5Z" fill="#2d2d30"/></svg>
<div class="t" style="left:127px;top:343px;font-size:16px;letter-spacing:0.2px;color:#1e1e1e;">Header Files</div>
<svg class="a" style="left:98px;top:367px" width="9" height="12" viewBox="0 0 9 12"><path d="M1.5 1.5L7 6L1.5 10.5Z" fill="none" stroke="#1e1e1e" stroke-width="1.3"/></svg>
<svg class="a" style="left:126px;top:364px" width="18" height="19" viewBox="0 0 18 19"><path d="M1.8 2.2H9L12.8 6V15.7H1.8Z" fill="#fdf3fd" stroke="#5e5e5e" stroke-width="1.4"/><path d="M9 2.2V6H12.8Z" fill="#5e5e5e"/><path d="M5 5.5V13.2M5 10Q5.5 8.5 7 8.5Q9 8.5 9 10.2V13.2" stroke="#a77aa7" stroke-width="1.5" fill="none"/></svg>
<div class="t" style="left:150px;top:366px;font-size:16px;letter-spacing:0.2px;color:#1e1e1e;">ImageTypeConverter.h</div>
<svg class="a" style="left:98px;top:390px" width="9" height="12" viewBox="0 0 9 12"><path d="M1.5 1.5L7 6L1.5 10.5Z" fill="none" stroke="#1e1e1e" stroke-width="1.3"/></svg>
<svg class="a" style="left:126px;top:387px" width="18" height="19" viewBox="0 0 18 19"><path d="M1.8 2.2H9L12.8 6V15.7H1.8Z" fill="#fdf3fd" stroke="#5e5e5e" stroke-width="1.4"/><path d="M9 2.2V6H12.8Z" fill="#5e5e5e"/><path d="M5 5.5V13.2M5 10Q5.5 8.5 7 8.5Q9 8.5 9 10.2V13.2" stroke="#a77aa7" stroke-width="1.5" fill="none"/></svg>
<div class="t" style="left:150px;top:389px;font-size:16px;letter-spacing:0.2px;color:#1e1e1e;">MainWindow.h</div>
<svg class="a" style="left:98px;top:413px" width="9" height="12" viewBox="0 0 9 12"><path d="M1.5 1.5L7 6L1.5 10.5Z" fill="none" stroke="#1e1e1e" stroke-width="1.3"/></svg>
<svg class="a" style="left:126px;top:410px" width="18" height="19" viewBox="0 0 18 19"><path d="M1.8 2.2H9L12.8 6V15.7H1.8Z" fill="#fdf3fd" stroke="#5e5e5e" stroke-width="1.4"/><path d="M9 2.2V6H12.8Z" fill="#5e5e5e"/><path d="M5 5.5V13.2M5 10Q5.5 8.5 7 8.5Q9 8.5 9 10.2V13.2" stroke="#a77aa7" stroke-width="1.5" fill="none"/></svg>
<div class="t" style="left:150px;top:412px;font-size:16px;letter-spacing:0.2px;color:#1e1e1e;">MatProcess.h</div>
<svg class="a" style="left:98px;top:436px" width="9" height="12" viewBox="0 0 9 12"><path d="M1.5 1.5L7 6L1.5 10.5Z" fill="none" stroke="#1e1e1e" stroke-width="1.3"/></svg>
<svg class="a" style="left:126px;top:433px" width="18" height="19" viewBox="0 0 18 19"><path d="M1.8 2.2H9L12.8 6V15.7H1.8Z" fill="#fdf3fd" stroke="#5e5e5e" stroke-width="1.4"/><path d="M9 2.2V6H12.8Z" fill="#5e5e5e"/><path d="M5 5.5V13.2M5 10Q5.5 8.5 7 8.5Q9 8.5 9 10.2V13.2" stroke="#a77aa7" stroke-width="1.5" fill="none"/></svg>
<div class="t" style="left:150px;top:435px;font-size:16px;letter-spacing:0.2px;color:#1e1e1e;">public_headers.h</div>
<svg class="a" style="left:75px;top:460px" width="10" height="10" viewBox="0 0 10 10"><path d="M8 1V8H1Z" fill="#1e1e1e"/></svg>
<svg class="a" style="left:102px;top:456px" width="18" height="19" viewBox="0 0 18 19"><path d="M2.5 5.5H6.5L8.5 3.5H17V16.5H2.5Z" fill="#fbf6ec" stroke="#d3c3a0" stroke-width="1.6"/><path d="M7 10.5H13.5L16 16H6.5Z" fill="#e6b672"/><path d="M0.5 13.5H7L4.8 15.5V18.5H2.7V15.5Z" fill="#2d2d30"/></svg>
<div class="t" style="left:127px;top:458px;font-size:16px;letter-spacing:0.2px;color:#1e1e1e;">Resource Files</div>
<div class="t" style="left:150px;top:481px;font-size:16px;letter-spacing:0.2px;color:#1e1e1e;">MainWindow.qrc</div>
<svg class="a" style="left:75px;top:506px" width="10" height="10" viewBox="0 0 10 10"><path d="M8 1V8H1Z" fill="#1e1e1e"/></svg>
<svg class="a" style="left:102px;top:502px" width="18" height="19" viewBox="0 0 18 19"><path d="M2.5 5.5H6.5L8.5 3.5H17V16.5H2.5Z" fill="#fbf6ec" stroke="#d3c3a0" stroke-width="1.6"/><path d="M7 10.5H13.5L16 16H6.5Z" fill="#e6b672"/><path d="M0.5 13.5H7L4.8 15.5V18.5H2.7V15.5Z" fill="#2d2d30"/></svg>
<div class="t" style="left:127px;top:504px;font-size:16px;letter-spacing:0.2px;color:#1e1e1e;">Source Files</div>
<svg class="a" style="left:98px;top:528px" width="9" height="12" viewBox="0 0 9 12"><path d="M1.5 1.5L7 6L1.5 10.5Z" fill="none" stroke="#1e1e1e" stroke-width="1.3"/></svg>
<svg class="a" style="left:126px;top:525px" width="18" height="19" viewBox="0 0 18 19"><path d="M1 8H9M5 4V12M9 10H17M13 6V14" stroke="#9b4f96" stroke-width="2.2"/></svg>
<div class="t" style="left:150px;top:527px;font-size:16px;letter-spacing:0.2px;color:#1e1e1e;">ImageTypeConverter.cpp</div>
<svg class="a" style="left:98px;top:551px" width="9" height="12" viewBox="0 0 9 12"><path d="M1.5 1.5L7 6L1.5 10.5Z" fill="none" stroke="#1e1e1e" stroke-width="1.3"/></svg>
<svg class="a" style="left:126px;top:548px" width="18" height="19" viewBox="0 0 18 19"><path d="M1 8H9M5 4V12M9 10H17M13 6V14" stroke="#9b4f96" stroke-width="2.2"/></svg>
<div class="t" style="left:150px;top:550px;font-size:16px;letter-spacing:0.2px;color:#1e1e1e;">main.cpp</div>
<svg class="a" style="left:98px;top:574px" width="9" height="12" viewBox="0 0 9 12"><path d="M1.5 1.5L7 6L1.5 10.5Z" fill="none" stroke="#1e1e1e" stroke-width="1.3"/></svg>
<svg class="a" style="left:126px;top:571px" width="18" height="19" viewBox="0 0 18 19"><path d="M1 8H9M5 4V12M9 10H17M13 6V14" stroke="#9b4f96" stroke-width="2.2"/></svg>
<div class="t" style="left:150px;top:573px;font-size:16px;letter-spacing:0.2px;color:#1e1e1e;">MainWindow.cpp</div>
<svg class="a" style="left:98px;top:597px" width="9" height="12" viewBox="0 0 9 12"><path d="M1.5 1.5L7 6L1.5 10.5Z" fill="none" stroke="#1e1e1e" stroke-width="1.3"/></svg>
<svg class="a" style="left:126px;top:594px" width="18" height="19" viewBox="0 0 18 19"><path d="M1 8H9M5 4V12M9 10H17M13 6V14" stroke="#9b4f96" stroke-width="2.2"/></svg>
<div class="t" style="left:150px;top:596px;font-size:16px;letter-spacing:0.2px;color:#1e1e1e;">MatProcess.cpp</div>
<svg class="a" style="left:102px;top:617px" width="18" height="19" viewBox="0 0 18 19"><path d="M3 4.5H8L10 2.5H17V16H3Z" fill="#e2bd80"/><path d="M3 8H17V16H3Z" fill="#ecc98f"/><path d="M0.5 13.5H7L4.8 15.5V18.5H2.7V15.5Z" fill="#2d2d30"/></svg>
<div class="t" style="left:127px;top:619px;font-size:16px;letter-spacing:0.2px;color:#1e1e1e;">Translation Files</div>
<div class="a" style="left:434px;top:106px;width:9px;height:854px;background:#33446a"></div>
<div id="editor">
<div class="a" style="left:443px;top:106px;width:171px;height:27px;background:#fff29d"></div>
<div class="t" style="left:449px;top:112px;font-size:16px;letter-spacing:0.1px;color:#1e1e1e">MainWindow.h</div>
<svg class="a" style="left:569px;top:113px" width="14" height="12" viewBox="0 0 14 12"><path d="M1 6H6M6 2V10M6 3H12M6 9H12M12 3V9" stroke="#3c3c3c" stroke-width="1.3" fill="none"/></svg>
<svg class="a" style="left:594px;top:112px" width="12" height="12" viewBox="0 0 12 12"><path d="M1 1L11 11M11 1L1 11" stroke="#3c3c3c" stroke-width="1.6"/></svg>
<svg class="a" style="left:1866px;top:118px" width="11" height="5" viewBox="0 0 11 5"><path d="M0 0H11L5.5 5Z" fill="#e6e8ee"/></svg>
<div class="a" style="left:443px;top:131px;width:1438px;height:2px;background:#fff29d"></div>
<div class="a" style="left:443px;top:133px;width:1438px;height:29px;background:#293955"></div>
<div class="a" style="left:444px;top:134px;width:538px;height:27px;background:#fcfcfd"></div>
<svg class="a" style="left:450px;top:140px" width="14" height="13" viewBox="0 0 14 13"><path d="M1 6.5H12M7 1.5L12 6.5L7 11.5" stroke="#c27d1a" stroke-width="2.2" fill="none"/></svg>
<div class="t" style="left:472px;top:140px;font-size:16px;letter-spacing:0.2px;color:#1e1e1e">MainWindow.h</div>
<svg class="a" style="left:967px;top:146px" width="8" height="4" viewBox="0 0 8 4"><path d="M0 0H8L4 4Z" fill="#1e1e1e"/></svg>
<div class="a" style="left:982px;top:134px;width:21px;height:27px;background:#f0f1f5;border-left:1px solid #cdd2dc"></div>
<div class="a" style="left:984px;top:135px;width:17px;height:11px;background:#fcfcfd;border:1px solid #d8dce5"></div>
<div class="a" style="left:984px;top:148px;width:17px;height:12px;background:#fcfcfd;border:1px solid #d8dce5"></div>
<svg class="a" style="left:988px;top:140px" width="8" height="4" viewBox="0 0 8 4"><path d="M0 4H8L4 0Z" fill="#1e1e1e"/></svg>
<svg class="a" style="left:988px;top:152px" width="8" height="4" viewBox="0 0 8 4"><path d="M0 0H8L4 4Z" fill="#1e1e1e"/></svg>
<div class="a" style="left:1007px;top:134px;width:560px;height:27px;background:#fcfcfd"></div>
<svg class="a" style="left:1013px;top:140px" width="14" height="13" viewBox="0 0 14 13"><path d="M1 6.5H12M7 1.5L12 6.5L7 11.5" stroke="#c27d1a" stroke-width="2.2" fill="none"/></svg>
<div class="t" style="left:1035px;top:140px;font-size:15.3px;width:512px;height:20px;overflow:hidden;color:#1e1e1e">F:\02_后处理技术\03_后处理技术视频\VTK医学图像三维重建教程\Code\Pipl</div>
<svg class="a" style="left:1553px;top:146px" width="8" height="4" viewBox="0 0 8 4"><path d="M0 0H8L4 4Z" fill="#1e1e1e"/></svg>
<div class="a" style="left:1572px;top:134px;width:263px;height:27px;background:#fcfcfd"></div>
<svg class="a" style="left:1578px;top:139px" width="15" height="17" viewBox="0 0 15 17"><path d="M1 1H9L14 6V16H1Z M9 1V6H14" fill="#fff" stroke="#424242" stroke-width="1.3"/></svg>
<div class="t" style="left:1599px;top:140px;font-size:16px;letter-spacing:0.2px;color:#1e1e1e">PipleReconDemo</div>
<svg class="a" style="left:1821px;top:146px" width="8" height="4" viewBox="0 0 8 4"><path d="M0 0H8L4 4Z" fill="#1e1e1e"/></svg>
<div class="a" style="left:1836px;top:134px;width:45px;height:27px;background:#d6dbe9"></div>
<svg class="a" style="left:1839px;top:137px" width="18" height="21" viewBox="0 0 18 21"><defs><linearGradient id="gog" x1="0" y1="0" x2="0" y2="1"><stop offset="0" stop-color="#7ed35a"/><stop offset="1" stop-color="#2f8f2a"/></linearGradient></defs><path d="M5 20Q0 15 1.5 10Q3 5 10 4.5L9.5 0.5L17.5 6.5L10 12.5L10.2 8.6Q6.5 8.8 5.8 11.5Q5 14.5 8 20Z" fill="url(#gog)" stroke="#2a7a25" stroke-width="0.6"/></svg>
<div class="t" style="left:1854px;top:140px;font-size:17px;color:#1e1e1e">Go</div>
<div class="a" style="left:443px;top:162px;width:1438px;height:26px;background:#fcfcfd"></div>
<svg class="a" style="left:449px;top:166px" width="18" height="18" viewBox="0 0 18 18"><rect x="0.7" y="1.7" width="16" height="14" fill="#fbeefb" stroke="#a77aa7" stroke-width="1.4"/><path d="M2.5 5.5H9M5.8 2.5V8.5M7.5 10.5H13.5M10.5 7.5V14" stroke="#3a3a3a" stroke-width="1.8"/></svg>
<div class="t" style="left:470px;top:168px;font-size:16px;letter-spacing:0.2px;color:#1e1e1e">PipleReconDemo</div>
<svg class="a" style="left:907px;top:174px" width="8" height="4" viewBox="0 0 8 4"><path d="M0 0H8L4 4Z" fill="#1e1e1e"/></svg>
<div class="a" style="left:920px;top:162px;width:4px;height:26px;background:#b3b9c6"></div>
<div class="t" style="left:951px;top:168px;font-size:16px;color:#1e1e1e">(全局范围)</div>
<svg class="a" style="left:1387px;top:174px" width="8" height="4" viewBox="0 0 8 4"><path d="M0 0H8L4 4Z" fill="#1e1e1e"/></svg>
<div class="a" style="left:1400px;top:162px;width:4px;height:26px;background:#b3b9c6"></div>
<svg class="a" style="left:1868px;top:174px" width="8" height="4" viewBox="0 0 8 4"><path d="M0 0H8L4 4Z" fill="#1e1e1e"/></svg>
<div class="a" style="left:443px;top:187px;width:1438px;height:1px;background:#c5cad6"></div>
<div class="a" style="left:443px;top:188px;width:1414px;height:752px;background:#fff"></div>
<div class="a" style="left:443px;top:188px;width:22px;height:752px;background:#e6e7ed"></div>
<div class="a" style="left:551px;top:188px;width:1px;height:675px;background:#a5a5a5"></div>
<div class="a" style="left:551px;top:863px;width:6px;height:1px;background:#a5a5a5"></div>
<div class="a" style="left:562px;top:211px;width:1px;height:280px;background-image:linear-gradient(#c0c0c0 58%,transparent 58%);background-size:1px 7px"></div>
<div class="a" style="left:562px;top:514px;width:1px;height:280px;background-image:linear-gradient(#c0c0c0 58%,transparent 58%);background-size:1px 7px"></div>
<div class="a" style="left:562px;top:817px;width:1px;height:23px;background-image:linear-gradient(#c0c0c0 58%,transparent 58%);background-size:1px 7px"></div>
<div class="t" style="left:471px;top:193.1px;width:40px;text-align:right;font-size:16px;color:#4689a0">19</div>
<div class="t" style="left:471px;top:216.4px;width:40px;text-align:right;font-size:16px;color:#4689a0">20</div>
<div class="t" style="left:471px;top:239.7px;width:40px;text-align:right;font-size:16px;color:#4689a0">21</div>
<div class="t" style="left:471px;top:262.9px;width:40px;text-align:right;font-size:16px;color:#4689a0">22</div>
<div class="t" style="left:471px;top:286.2px;width:40px;text-align:right;font-size:16px;color:#4689a0">23</div>
<div class="t" style="left:471px;top:309.5px;width:40px;text-align:right;font-size:16px;color:#4689a0">24</div>
<div class="t" style="left:471px;top:332.8px;width:40px;text-align:right;font-size:16px;color:#4689a0">25</div>
<div class="t" style="left:471px;top:356.1px;width:40px;text-align:right;font-size:16px;color:#4689a0">26</div>
<div class="t" style="left:471px;top:379.3px;width:40px;text-align:right;font-size:16px;color:#4689a0">27</div>
<div class="t" style="left:471px;top:402.6px;width:40px;text-align:right;font-size:16px;color:#4689a0">28</div>
<div class="t" style="left:471px;top:425.9px;width:40px;text-align:right;font-size:16px;color:#4689a0">29</div>
<div class="t" style="left:471px;top:449.2px;width:40px;text-align:right;font-size:16px;color:#4689a0">30</div>
<div class="t" style="left:471px;top:472.5px;width:40px;text-align:right;font-size:16px;color:#4689a0">31</div>
<div class="t" style="left:471px;top:495.7px;width:40px;text-align:right;font-size:16px;color:#4689a0">32</div>
<div class="t" style="left:471px;top:519.0px;width:40px;text-align:right;font-size:16px;color:#4689a0">33</div>
<div class="t" style="left:471px;top:542.3px;width:40px;text-align:right;font-size:16px;color:#4689a0">34</div>
<div class="t" style="left:471px;top:565.6px;width:40px;text-align:right;font-size:16px;color:#4689a0">35</div>
<div class="t" style="left:471px;top:588.9px;width:40px;text-align:right;font-size:16px;color:#4689a0">36</div>
<div class="t" style="left:471px;top:612.1px;width:40px;text-align:right;font-size:16px;color:#4689a0">37</div>
<div class="t" style="left:471px;top:635.4px;width:40px;text-align:right;font-size:16px;color:#4689a0">38</div>
<div class="t" style="left:471px;top:658.7px;width:40px;text-align:right;font-size:16px;color:#4689a0">39</div>
<div class="t" style="left:471px;top:682.0px;width:40px;text-align:right;font-size:16px;color:#4689a0">40</div>
<div class="t" style="left:471px;top:705.3px;width:40px;text-align:right;font-size:16px;color:#4689a0">41</div>
<div class="t" style="left:471px;top:728.5px;width:40px;text-align:right;font-size:16px;color:#4689a0">42</div>
<div class="t" style="left:471px;top:751.8px;width:40px;text-align:right;font-size:16px;color:#4689a0">43</div>
<div class="t" style="left:471px;top:775.1px;width:40px;text-align:right;font-size:16px;color:#4689a0">44</div>
<div class="t" style="left:471px;top:798.4px;width:40px;text-align:right;font-size:16px;color:#4689a0">45</div>
<div class="t" style="left:471px;top:821.7px;width:40px;text-align:right;font-size:16px;color:#4689a0">46</div>
<div class="t" style="left:471px;top:844.9px;width:40px;text-align:right;font-size:16px;color:#4689a0">47</div>
<div class="t" style="left:471px;top:868.2px;width:40px;text-align:right;font-size:16px;color:#4689a0">48</div>
<div class="t" style="left:559px;top:193.1px;font-size:16px;letter-spacing:0.39px;color:#2323a3">public:</div>
<div class="t" style="left:578.5px;top:216.4px;font-size:16px;letter-spacing:0.88px;color:#3e7e92">MainWindow</div>
<div class="t" style="left:679px;top:216.4px;font-size:16px;letter-spacing:0.67px;color:#1e1e1e">(</div>
<div class="t" style="left:685px;top:216.4px;font-size:16px;letter-spacing:0.67px;color:#3e7e92">QWidget</div>
<div class="t" style="left:758.6px;top:216.4px;font-size:16px;letter-spacing:2.00px;color:#1e1e1e">*</div>
<div class="t" style="left:767px;top:216.4px;font-size:16px;letter-spacing:0.27px;color:#15155e">parent</div>
<div class="t" style="left:820.6px;top:216.4px;font-size:16px;letter-spacing:0.06px;color:#1e1e1e">=</div>
<div class="t" style="left:836.5px;top:216.4px;font-size:16px;letter-spacing:0.84px;color:#2323a3">nullptr</div>
<div class="t" style="left:886px;top:216.4px;font-size:16px;letter-spacing:-0.39px;color:#1e1e1e">);</div>
<div class="t" style="left:578px;top:239.7px;font-size:16px;letter-spacing:1.66px;color:#1e1e1e">~</div>
<div class="t" style="left:589.5px;top:239.7px;font-size:16px;letter-spacing:0.88px;color:#3e7e92">MainWindow</div>
<div class="t" style="left:690px;top:239.7px;font-size:16px;letter-spacing:-0.04px;color:#1e1e1e">();</div>
<div class="t" style="left:577.7px;top:309.5px;font-size:16px;letter-spacing:0.24px;color:#3e7e92">MatProcess</div>
<div class="t" style="left:675px;top:309.5px;font-size:16px;letter-spacing:0.06px;color:#15155e">process;</div>
<div class="t" style="left:577.7px;top:332.8px;font-size:16px;letter-spacing:0.52px;color:#3e7e92">ImageTypeConverter</div>
<div class="t" style="left:746.8px;top:332.8px;font-size:16px;letter-spacing:0.16px;color:#15155e">con;</div>
<div class="t" style="left:577.7px;top:402.6px;font-size:16px;letter-spacing:0.48px;color:#2323a3">void</div>
<div class="t" style="left:619px;top:402.6px;font-size:16px;letter-spacing:1.55px;color:#8b1a1a">O</div>
<div class="t" style="left:577.7px;top:425.9px;font-size:16px;letter-spacing:0.48px;color:#2323a3">void</div>
<div class="t" style="left:619px;top:425.9px;font-size:16px;letter-spacing:1.55px;color:#8b1a1a">O</div>
<div class="t" style="left:559px;top:495.7px;font-size:16px;letter-spacing:0.39px;color:#2323a3">public:</div>
<div class="t" style="left:578px;top:519.0px;width:55px;overflow:hidden;height:22px;font-size:16px;letter-spacing:0.60px;color:#3e7e92;font-style:italic">vtkSmartPointer</div>
<div class="t" style="left:577px;top:542.3px;width:56px;overflow:hidden;height:22px;font-size:16px;letter-spacing:0.60px;color:#2a7d2a">//Renderer</div>
<div class="t" style="left:578px;top:565.6px;width:55px;overflow:hidden;height:22px;font-size:16px;letter-spacing:0.60px;color:#3e7e92;font-style:italic">vtkSmartPointer</div>
<div class="t" style="left:577px;top:588.9px;font-size:16px;letter-spacing:1.05px;color:#2a7d2a">//renWin</div>
<div class="t" style="left:579px;top:612.1px;font-size:16px;letter-spacing:0.57px;color:#3e7e92;font-style:italic">vtkSmartPointer</div>
<div class="t" style="left:702px;top:615.6px;font-size:12px;letter-spacing:0.98px;color:#1e1e1e">&lt;</div>
<div class="t" style="left:713.4px;top:612.1px;font-size:16px;letter-spacing:0.50px;color:#3e7e92;font-style:italic">vtkGenericOpenGLRenderWindow</div>
<div class="t" style="left:974px;top:615.6px;font-size:12px;letter-spacing:0.98px;color:#1e1e1e">&gt;</div>
<div class="t" style="left:989.6px;top:612.1px;font-size:16px;letter-spacing:0.45px;color:#15155e">renWin3D;</div>
<div class="t" style="left:579px;top:635.4px;font-size:16px;letter-spacing:0.57px;color:#3e7e92;font-style:italic">vtkSmartPointer</div>
<div class="t" style="left:702px;top:638.9px;font-size:12px;letter-spacing:0.98px;color:#1e1e1e">&lt;</div>
<div class="t" style="left:713.4px;top:635.4px;font-size:16px;letter-spacing:0.91px;color:#3e7e92;font-style:italic">vtkActor</div>
<div class="t" style="left:779px;top:638.9px;font-size:12px;letter-spacing:0.98px;color:#1e1e1e">&gt;</div>
<div class="t" style="left:807.7px;top:635.4px;font-size:16px;letter-spacing:0.34px;color:#15155e">current_actor;</div>
<div class="t" style="left:577px;top:682.0px;font-size:16px;letter-spacing:0.74px;color:#3e7e92">QVector</div>
<div class="t" style="left:641px;top:685.5px;font-size:12px;letter-spacing:1.98px;color:#1e1e1e">&lt;</div>
<div class="t" style="left:652px;top:682.0px;font-size:16px;letter-spacing:0.72px;color:#3e7e92">ImageInfo</div>
<div class="t" style="left:731px;top:685.5px;font-size:12px;letter-spacing:1.98px;color:#1e1e1e">&gt;</div>
<div class="t" style="left:746px;top:682.0px;font-size:16px;letter-spacing:0.29px;color:#15155e">vec_imagesInfo;</div>
<div class="t" style="left:558.6px;top:798.4px;font-size:16px;letter-spacing:0.49px;color:#2323a3">private:</div>
<div class="t" style="left:577px;top:821.7px;font-size:16px;letter-spacing:-1.00px;color:#3e7e92">Ui</div>
<div class="t" style="left:590px;top:821.7px;font-size:16px;letter-spacing:0.55px;color:#1e1e1e">::</div>
<div class="t" style="left:601px;top:821.7px;font-size:16px;letter-spacing:0.55px;color:#3e7e92">MainWindowClass</div>
<div class="t" style="left:746px;top:821.7px;font-size:16px;letter-spacing:0.03px;color:#15155e">ui;</div>
<div class="t" style="left:559px;top:844.9px;font-size:16px;letter-spacing:-0.90px;color:#1e1e1e">};</div>
<svg class="a" style="left:619px;top:417px" width="14" height="5" viewBox="0 0 14 5"><path d="M0 3Q2 0 3.5 2.5T7 2.5T10.5 2.5T14 2.5" stroke="#3a9a3a" stroke-width="1.1" fill="none"/></svg>
<div class="a" style="left:862px;top:580px;width:6px;height:1px;background:#222"></div>
<div class="a" style="left:919px;top:580px;width:6px;height:1px;background:#222"></div>
<div class="a" style="left:945px;top:578px;width:2px;height:3px;background:#222"></div>
<div class="a" style="left:1857px;top:188px;width:24px;height:772px;background:#e8e8ec"></div>
<div class="a" style="left:1857px;top:188px;width:23px;height:21px;background:#f5f5f7;border:1px solid #cdd2dc"></div>
<svg class="a" style="left:1861px;top:190px" width="16" height="18" viewBox="0 0 16 18"><path d="M1 7H15M1 10H15M8 1V6M5.5 3.5L8 1L10.5 3.5M8 12V17M5.5 14.5L8 17L10.5 14.5" stroke="#1e1e1e" stroke-width="1.4" fill="none"/></svg>
<svg class="a" style="left:1863px;top:218px" width="11" height="6" viewBox="0 0 11 6"><path d="M0 6H11L5.5 0Z" fill="#868999"/></svg>
<div class="a" style="left:1857px;top:296px;width:24px;height:2px;background:#00008b"></div>
<div class="a" style="left:1873px;top:366px;width:5px;height:6px;background:#c2c3c9"></div>
<div class="a" style="left:1861px;top:390px;width:14px;height:274px;background:#c2c3c9"></div>
<div class="a" style="left:1873px;top:461px;width:5px;height:6px;background:#3c9a3c"></div>
<svg class="a" style="left:1863px;top:924px" width="11" height="6" viewBox="0 0 11 6"><path d="M0 0H11L5.5 6Z" fill="#868999"/></svg>
<div class="a" style="left:443px;top:940px;width:1438px;height:20px;background:#e8e8ec"></div>
<div class="a" style="left:444px;top:940px;width:75px;height:20px;background:#fcfcfd;border:1px solid #cdd2dc"></div>
<div class="t" style="left:448px;top:943px;font-size:15px;color:#1e1e1e">98 %</div>
<svg class="a" style="left:507px;top:948px" width="8" height="4" viewBox="0 0 8 4"><path d="M0 0H8L4 4Z" fill="#1e1e1e"/></svg>
<div class="a" style="left:519px;top:941px;width:1px;height:19px;background:#cdd2dc"></div>
<svg class="a" style="left:526px;top:944px" width="6" height="11" viewBox="0 0 6 11"><path d="M6 0V11L0 5.5Z" fill="#c2c3c9"/></svg>
<svg class="a" style="left:1841px;top:944px" width="6" height="11" viewBox="0 0 6 11"><path d="M0 0V11L6 5.5Z" fill="#c2c3c9"/></svg>
</div>
<div id="popup">
<div class="a" style="left:633px;top:353px;width:631px;height:225px;background:#fafafc"></div>
<div class="a" style="left:633px;top:353px;width:631px;height:30px;background:#ededf0;border-radius:3px 3px 0 0"></div>
<svg class="a" style="left:635px;top:353px" width="31" height="29" viewBox="0 0 31 29"><defs><linearGradient id="cg" x1="0" y1="0" x2="0" y2="1"><stop offset="0" stop-color="#ececf0"/><stop offset="1" stop-color="#a4a4aa"/></linearGradient></defs><path d="M18 4Q25 0 26 7" stroke="#3a3a3a" stroke-width="2.4" fill="none"/><path d="M2.5 9L20 3.5Q24 3 25 6V23L8 27.5Q3.5 27.5 3 23Z" fill="url(#cg)" stroke="#8a8a90" stroke-width="0.6"/><ellipse cx="7" cy="12.5" rx="4.2" ry="4.6" fill="#7aa6dc" stroke="#1e1e1e" stroke-width="1.4"/><circle cx="9.5" cy="19" r="1.1" fill="#b02020"/><rect x="13" y="13.5" width="17" height="13.5" fill="#cfd0d6" stroke="#8a8a90" stroke-width="0.8"/><rect x="14.8" y="15.3" width="13.4" height="9.8" fill="#5d9fe2"/><rect x="16" y="18.5" width="9" height="2.8" fill="#9a2f6e"/></svg>
<div class="t" style="left:681px;top:360px;font-size:14.5px;color:#1a1a1a;font-family:'Liberation Serif',serif;letter-spacing:0.5px">屏幕录像</div>
<div class="t" style="left:771px;top:360px;font-size:14.5px;color:#1a1a1a;font-family:'Liberation Serif',serif">摄像头(F5)</div>
<div class="t" style="left:853px;top:360px;font-size:14.5px;color:#1a1a1a;font-family:'Liberation Serif',serif">录像(F6)</div>
<div class="t" style="left:920px;top:360px;font-size:14.5px;color:#1a1a1a;font-family:'Liberation Serif',serif">暂停(F7)</div>
<div class="t" style="left:988px;top:360px;font-size:14.5px;color:#1a1a1a;font-family:'Liberation Serif',serif">停止(F8)</div>
<div class="a" style="left:1213px;top:375px;width:13px;height:2px;background:#333"></div>
<svg class="a" style="left:1241px;top:359px" width="16" height="16" viewBox="0 0 16 16"><path d="M1 1L15 15M15 1L1 15" stroke="#333" stroke-width="1.6"/></svg>
<div class="a" style="left:646px;top:403px;width:80px;height:80px;border-radius:2px;border:1px solid #b5b5b5;background:#f8f8f9"></div>
<div class="a" style="left:758px;top:403px;width:80px;height:80px;border-radius:2px;border:1px solid #b5b5b5;background:#f8f8f9"></div>
<div class="a" style="left:858px;top:403px;width:80px;height:80px;border-radius:2px;border:1px solid #b5b5b5;background:#f8f8f9"></div>
<div class="a" style="left:958px;top:403px;width:80px;height:80px;border-radius:3px;border:1px solid #8e8e8e;background:linear-gradient(#b4b4b4,#a2a2a2)"></div>
<div class="a" style="left:1058px;top:403px;width:80px;height:80px;border-radius:3px;border:1px solid #8e8e8e;background:linear-gradient(#b4b4b4,#a2a2a2)"></div>
<div class="a" style="left:1158px;top:403px;width:80px;height:80px;border-radius:2px;border:1px solid #b5b5b5;background:#f8f8f9"></div>
<svg class="a" style="left:652px;top:404px" width="72" height="78" viewBox="0 0 72 78"><defs><radialGradient id="wg" cx="0.45" cy="0.35" r="0.7"><stop offset="0" stop-color="#ffffff"/><stop offset="0.7" stop-color="#ededef"/><stop offset="1" stop-color="#b8b8bc"/></radialGradient><linearGradient id="bg2" x1="0" y1="0" x2="0" y2="1"><stop offset="0" stop-color="#8a8a8a"/><stop offset="1" stop-color="#3a3a3a"/></linearGradient></defs>
<path d="M52 66H62Q67 64 62 60L57 56" stroke="#555" stroke-width="1.3" fill="none"/>
<path d="M16 70Q14 58 24 55H44Q54 58 52 70Q34 74 16 70Z" fill="url(#bg2)"/>
<ellipse cx="34" cy="33" rx="28" ry="25.5" fill="url(#wg)" stroke="#5a5a5c" stroke-width="1.3"/>
<ellipse cx="34" cy="7.5" rx="8" ry="3.6" fill="#6c9ad6" stroke="#4a78b8" stroke-width="0.8"/>
<circle cx="34" cy="34" r="12.5" fill="#1e2a3c" stroke="#0e0e0e" stroke-width="1.6"/><circle cx="34" cy="35" r="8" fill="#2e4260"/><circle cx="34" cy="36" r="4" fill="#0a0a0a"/><ellipse cx="34" cy="30.5" rx="4.5" ry="2.6" fill="#fff" opacity="0.95"/><path d="M30 41.5Q34 43 38 41.5" stroke="#c8d23a" stroke-width="1.3" fill="none"/>
<circle cx="20" cy="20.4" r="2.8" fill="#f4f47a" stroke="#c8cf30" stroke-width="1.6"/>
<ellipse cx="48" cy="48.5" rx="2" ry="1.3" fill="#555" transform="rotate(-30 48 48.5)"/></svg>
<svg class="a" style="left:775px;top:420px" width="46" height="46" viewBox="0 0 46 46"><path d="M5.5 13V5.5H13M28.5 5.5H36V13M5.5 28.5V36H13" stroke="#e59020" stroke-width="3.4" fill="none"/><rect x="16.5" y="3.8" width="3.8" height="3.4" fill="#e59020"/><rect x="22.5" y="3.8" width="3.8" height="3.4" fill="#e59020"/><rect x="3.8" y="16.5" width="3.4" height="3.8" fill="#e59020"/><rect x="3.8" y="22.5" width="3.4" height="3.8" fill="#e59020"/><rect x="34.3" y="16.5" width="3.4" height="3.8" fill="#e59020"/><rect x="34.3" y="22.5" width="3.4" height="3.8" fill="#e59020"/><rect x="16.5" y="34.3" width="3.8" height="3.4" fill="#e59020"/><rect x="22.5" y="34.3" width="3.8" height="3.4" fill="#e59020"/><path d="M28 35.5H41.8M35 28.7V41.8" stroke="#f28a12" stroke-width="3.4"/></svg>
<svg class="a" style="left:824px;top:440px" width="7" height="4" viewBox="0 0 7 4"><path d="M0 0H7L3.5 4Z" fill="#555"/></svg>
<svg class="a" style="left:882px;top:427px" width="32" height="36" viewBox="0 0 32 36"><defs><radialGradient id="rg" cx="0.55" cy="0.3" r="0.75"><stop offset="0" stop-color="#ff8a7a"/><stop offset="0.5" stop-color="#e62a1e"/><stop offset="1" stop-color="#b01208"/></radialGradient></defs><circle cx="16" cy="15" r="14.5" fill="url(#rg)"/><path d="M9 14L9 30L13 26L16 33L19 32L16 25L21 25Z" fill="#fff" stroke="#111" stroke-width="1.2"/></svg>
<svg class="a" style="left:980px;top:424px" width="36" height="38" viewBox="0 0 36 38"><defs><linearGradient id="pg" x1="0" y1="0" x2="0" y2="1"><stop offset="0" stop-color="#cfcfcf"/><stop offset="1" stop-color="#b8b8b8"/></linearGradient></defs><rect x="2.5" y="2" width="11" height="34" rx="2.5" fill="url(#pg)" stroke="#8f8f8f" stroke-width="1"/><rect x="21.5" y="2" width="11" height="34" rx="2.5" fill="url(#pg)" stroke="#8f8f8f" stroke-width="1"/><path d="M3 24Q6 19 13 18V35H3Z" fill="#9c9c9c"/><path d="M22 22Q26 20 32 20V35H22Z" fill="#9c9c9c"/></svg>
<svg class="a" style="left:1080px;top:426px" width="36" height="36" viewBox="0 0 36 36"><defs><linearGradient id="sg" x1="0" y1="0" x2="0" y2="1"><stop offset="0" stop-color="#c6c6c6"/><stop offset="1" stop-color="#b2b2b2"/></linearGradient><linearGradient id="sg2" x1="0" y1="0" x2="1" y2="1"><stop offset="0" stop-color="#9a9a9a"/><stop offset="1" stop-color="#c8c8c8"/></linearGradient></defs><rect x="2.5" y="1.5" width="31" height="32" fill="url(#sg)" stroke="#8a8a8a" stroke-width="1.2"/><path d="M3 20Q14 12 33 11V33H3Z" fill="url(#sg2)"/></svg>
<svg class="a" style="left:1177px;top:422px" width="41" height="41" viewBox="0 0 41 41"><defs><radialGradient id="gg" cx="0.35" cy="0.3" r="0.85"><stop offset="0" stop-color="#f2f2f2"/><stop offset="0.6" stop-color="#c4c4c4"/><stop offset="1" stop-color="#8e8e8e"/></radialGradient></defs><rect x="17" y="1.5" width="7" height="8" rx="1.5" transform="rotate(0 20.5 20.5)" fill="url(#gg)"/><rect x="17" y="1.5" width="7" height="8" rx="1.5" transform="rotate(36 20.5 20.5)" fill="url(#gg)"/><rect x="17" y="1.5" width="7" height="8" rx="1.5" transform="rotate(72 20.5 20.5)" fill="url(#gg)"/><rect x="17" y="1.5" width="7" height="8" rx="1.5" transform="rotate(108 20.5 20.5)" fill="url(#gg)"/><rect x="17" y="1.5" width="7" height="8" rx="1.5" transform="rotate(144 20.5 20.5)" fill="url(#gg)"/><rect x="17" y="1.5" width="7" height="8" rx="1.5" transform="rotate(180 20.5 20.5)" fill="url(#gg)"/><rect x="17" y="1.5" width="7" height="8" rx="1.5" transform="rotate(216 20.5 20.5)" fill="url(#gg)"/><rect x="17" y="1.5" width="7" height="8" rx="1.5" transform="rotate(252 20.5 20.5)" fill="url(#gg)"/><rect x="17" y="1.5" width="7" height="8" rx="1.5" transform="rotate(288 20.5 20.5)" fill="url(#gg)"/><rect x="17" y="1.5" width="7" height="8" rx="1.5" transform="rotate(324 20.5 20.5)" fill="url(#gg)"/><circle cx="20.5" cy="20.5" r="14.5" fill="url(#gg)"/><circle cx="20.5" cy="20.5" r="8.5" fill="none" stroke="#a8a8a8" stroke-width="2.5"/><circle cx="20.5" cy="20.5" r="6" fill="#fafafa"/></svg>
<div class="t" style="left:653px;top:496px;font-size:14.5px;color:#1a1a1a;font-family:'Liberation Serif',serif">录像</div>
<div class="a" style="left:646px;top:525px;width:109px;height:29px;border:1px solid #b5b5b5;border-radius:2px;background:#f6f6f7"></div>
<svg class="a" style="left:651px;top:530px" width="20" height="19" viewBox="0 0 20 19"><path d="M2 5H8L10 3H18V17H2Z" fill="#e8b520"/><path d="M1 8H19V17Q19 18 18 18H2Q1 18 1 17Z" fill="#f7cf3c"/><path d="M5 2L13 1L15 5" stroke="#9a9a9a" stroke-width="1" fill="#ddd"/></svg>
<div class="t" style="left:673px;top:531px;font-size:14.5px;color:#1a1a1a;font-family:'Liberation Serif',serif;letter-spacing:0.3px">输出文件夹</div>
<div class="a" style="left:1004px;top:530px;width:17px;height:17px;border:1px solid #c8c8c8;background:#fff"></div><svg class="a" style="left:1007px;top:533px" width="12" height="12" viewBox="0 0 12 12"><path d="M1.5 6L4.5 10L10.5 1.5" stroke="#111" stroke-width="2.2" fill="none"/></svg>
<div class="a" style="left:1111px;top:530px;width:17px;height:17px;border:1px solid #c8c8c8;background:#fff"></div><svg class="a" style="left:1114px;top:533px" width="12" height="12" viewBox="0 0 12 12"><path d="M1.5 6L4.5 10L10.5 1.5" stroke="#111" stroke-width="2.2" fill="none"/></svg>
<div class="t" style="left:1029px;top:531px;font-size:14.5px;color:#1a1a1a;font-family:'Liberation Serif',serif;letter-spacing:0.2px">使用麦克风</div>
<div class="t" style="left:1135px;top:531px;font-size:14.5px;color:#1a1a1a;font-family:'Liberation Serif',serif;letter-spacing:0.2px">使用抓取的声音</div>
</div>
<div id="status" class="a"><svg class="a" style="left:5px;top:7px" width="21" height="16" viewBox="0 0 21 16"><path d="M5 1.5H20L16 14.5H1Z" fill="none" stroke="#fff" stroke-width="1.6"/></svg>
<div class="t" style="left:36px;top:7px;font-size:16px;color:#fff">Ready</div>
<div class="t" style="left:971px;top:7px;font-size:15px;color:#fff">行 13</div>
<div class="t" style="left:1085px;top:7px;font-size:15px;color:#fff">列 1</div>
<div class="t" style="left:1199px;top:7px;font-size:15px;color:#fff">字符 1</div>
<div class="t" style="left:1369px;top:7px;font-size:15px;color:#fff">Ins</div>
<svg class="a" style="left:1739px;top:7px" width="12" height="16" viewBox="0 0 12 16"><path d="M6 15V2M1 7L6 1.5L11 7" stroke="#fff" stroke-width="2" fill="none"/></svg>
<div class="t" style="left:1764px;top:7px;font-size:15px;color:#fff">添加到源代码管理</div>
<svg class="a" style="left:1891px;top:11px" width="11" height="6" viewBox="0 0 11 6"><path d="M0 6H11L5.5 0Z" fill="#fff"/></svg></div>
<div id="task" class="a"></div>
<svg class="a" style="left:20px;top:1045px" width="20" height="20" viewBox="0 0 20 20"><path d="M0 2.8L8.2 1.7V9.5H0ZM9.2 1.5L20 0V9.5H9.2ZM0 10.5H8.2V18.3L0 17.2ZM9.2 10.5H20V20L9.2 18.5Z" fill="#fff"/></svg>
<div class="a" style="left:69px;top:1077px;width:154px;height:3px;background:#76b9ed"></div>
<svg class="a" style="left:79px;top:1043px" width="19" height="24" viewBox="0 0 19 24"><path d="M2 3L9 1V22L2 24Z" fill="#e9c46a"/><path d="M9 1L17 3V19L9 22Z" fill="#f8d775"/><path d="M2 3L9 1L17 3" fill="none" stroke="#d9a83a" stroke-width="0.6"/></svg>
<div class="t" style="left:109px;top:1047.5px;font-size:16px;color:#fff">F:\ParallelPos...</div>
<div class="a" style="left:233px;top:1077px;width:155px;height:3px;background:#76b9ed"></div>
<svg class="a" style="left:243px;top:1043px" width="19" height="24" viewBox="0 0 19 24"><path d="M2 3L9 1V22L2 24Z" fill="#e9c46a"/><path d="M9 1L17 3V19L9 22Z" fill="#f8d775"/><path d="M2 3L9 1L17 3" fill="none" stroke="#d9a83a" stroke-width="0.6"/></svg>
<div class="t" style="left:273px;top:1047.5px;font-size:16px;color:#fff">F:\02_后处理...</div>
<div class="a" style="left:398px;top:1077px;width:154px;height:3px;background:#76b9ed"></div>
<svg class="a" style="left:408px;top:1043px" width="19" height="24" viewBox="0 0 19 24"><path d="M2 3L9 1V22L2 24Z" fill="#e9c46a"/><path d="M9 1L17 3V19L9 22Z" fill="#f8d775"/><path d="M2 3L9 1L17 3" fill="none" stroke="#d9a83a" stroke-width="0.6"/></svg>
<div class="t" style="left:438px;top:1047.5px;font-size:16px;color:#fff">F:\02_后处理...</div>
<svg class="a" style="left:571px;top:1044px" width="32" height="24" viewBox="0 0 32 24"><defs><linearGradient id="wpsg" x1="0" y1="0" x2="1" y2="0"><stop offset="0" stop-color="#e8261c"/><stop offset="1" stop-color="#f5522a"/></linearGradient></defs><path d="M3 4H12L8 18Z M9.5 4L16 19.5L21 10L23.5 19.5L29 4H17.5" fill="none" stroke="url(#wpsg)" stroke-width="3.2" stroke-linejoin="miter"/></svg>
<svg class="a" style="left:629px;top:1040px" width="32" height="31" viewBox="0 0 32 31"><circle cx="15" cy="14" r="11" fill="none" stroke="#2196f3" stroke-width="5"/><path d="M14 28Q14 21 20 21Q23 17 27 20Q32 20 31 26Q31 29 28 29H16Q14 29 14 28Z" fill="#fff"/></svg>
<svg class="a" style="left:687px;top:1040px" width="32" height="32" viewBox="0 0 32 32"><circle cx="16" cy="16" r="15" fill="#db4437"/><path d="M16 16L3 23.5A15 15 0 0 0 23.5 29Z" fill="#0f9d58"/><path d="M16 16L23.5 29A15 15 0 0 0 29 8.5H16Z" fill="#f4b400"/><path d="M16 16L3 23.5A15 15 0 0 1 16 1 M16 1A15 15 0 0 1 29 8.5H16Z" fill="#db4437"/><circle cx="16" cy="16" r="7" fill="#fff"/><circle cx="16" cy="16" r="5.5" fill="#4285f4"/></svg>
<svg class="a" style="left:745px;top:1039px" width="32" height="33" viewBox="0 0 32 33"><rect x="2" y="11" width="18" height="18" rx="2" fill="none" stroke="#f39c12" stroke-width="4.5"/><rect x="12" y="3" width="18" height="18" rx="2" fill="none" stroke="#1ba1c4" stroke-width="4.5"/></svg>
<svg class="a" style="left:803px;top:1040px" width="32" height="32" viewBox="0 0 32 32"><circle cx="19" cy="12" r="8.5" fill="none" stroke="#f57c00" stroke-width="4.5"/><path d="M13 18L4 28" stroke="#f57c00" stroke-width="5" stroke-linecap="round"/></svg>
<svg class="a" style="left:861px;top:1039px" width="32" height="33" viewBox="0 0 32 33"><defs><linearGradient id="eg1" x1="0" y1="1" x2="1" y2="0"><stop offset="0" stop-color="#0b57a8"/><stop offset="0.55" stop-color="#1e9ae0"/><stop offset="1" stop-color="#52d67a"/></linearGradient><linearGradient id="eg2" x1="0" y1="0" x2="1" y2="1"><stop offset="0" stop-color="#1a6fc4"/><stop offset="1" stop-color="#0c4f9c"/></linearGradient></defs><circle cx="16" cy="16.5" r="15" fill="url(#eg1)"/><path d="M3 20Q2 12 10 10Q18 9 21 15Q22 19 17 19Q12 19 12 23Q13 30 22 30Q10 33 5 26Z" fill="url(#eg2)"/><path d="M12 22Q12 18 17 18.5Q23 19 25 15Q27 21 22 24Q17 27 12 22Z" fill="#2bb3e8" opacity="0.5"/></svg>
<div class="a" style="left:912px;top:1077px;width:154px;height:3px;background:#76b9ed"></div>
<div class="t" style="left:951px;top:1047.5px;font-size:16px;color:#fff">格式工厂 X64 ...</div>
<div class="a" style="left:1077px;top:1077px;width:154px;height:3px;background:#76b9ed"></div>
<div class="t" style="left:1116px;top:1047.5px;font-size:16px;color:#fff">PipleReconD...</div>
<svg class="a" style="left:918px;top:1041px" width="29" height="28" viewBox="0 0 29 28"><ellipse cx="14" cy="16" rx="13" ry="11" fill="#d5d8de" stroke="#9aa0aa" stroke-width="1"/><circle cx="11" cy="15" r="6" fill="#1f3f7a"/><circle cx="11" cy="15" r="2.5" fill="#e8e8e8"/><rect x="16" y="3" width="10" height="10" fill="#c9ccd2" stroke="#888" stroke-width="0.8"/></svg>
<svg class="a" style="left:1081px;top:1039px" width="34" height="33" viewBox="0 0 34 33"><polygon points="24,1 32,4.5 32,28.5 24,32" fill="#8661c5"/><polygon points="3,26 24,29 24,32 8,29" fill="#8661c5"/><path d="M5 10 L19 23 L19 8 L5 20 Z" fill="none" stroke="#8661c5" stroke-width="2.8" stroke-linejoin="round"/></svg>
<div class="a" style="left:1237px;top:1030px;width:164px;height:50px;background:#404040"></div>
<div class="a" style="left:1237px;top:1077px;width:164px;height:3px;background:#76b9ed"></div>
<svg class="a" style="left:1248px;top:1041px" width="31" height="29" viewBox="0 0 31 29"><defs><linearGradient id="cg2" x1="0" y1="0" x2="0" y2="1"><stop offset="0" stop-color="#ececf0"/><stop offset="1" stop-color="#a4a4aa"/></linearGradient></defs><path d="M18 4Q25 0 26 7" stroke="#3a3a3a" stroke-width="2.4" fill="none"/><path d="M2.5 9L20 3.5Q24 3 25 6V23L8 27.5Q3.5 27.5 3 23Z" fill="url(#cg2)" stroke="#8a8a90" stroke-width="0.6"/><ellipse cx="7" cy="12.5" rx="4.2" ry="4.6" fill="#7aa6dc" stroke="#1e1e1e" stroke-width="1.4"/><circle cx="9.5" cy="19" r="1.1" fill="#b02020"/><rect x="13" y="13.5" width="17" height="13.5" fill="#cfd0d6" stroke="#8a8a90" stroke-width="0.8"/><rect x="14.8" y="15.3" width="13.4" height="9.8" fill="#5d9fe2"/><rect x="16" y="18.5" width="9" height="2.8" fill="#9a2f6e"/></svg>
<div class="t" style="left:1282px;top:1047.5px;font-size:16px;color:#fff">屏幕录像</div>
<svg class="a" style="left:1416px;top:1044px" width="13" height="22" viewBox="0 0 13 22"><path d="M9 0L1 12H6L3 22L12 9H7L10 0Z" fill="#fff"/></svg>
<div class="a" style="left:1431px;top:1044px;width:38px;height:22px;border:2px solid #fff;background:#1f1f1f"></div>
<div class="a" style="left:1434px;top:1047px;width:32px;height:16px;background:#1e9a46"></div>
<div class="a" style="left:1469px;top:1050px;width:4px;height:10px;background:#fff"></div>
<div class="t" style="left:1438px;top:1049px;font-size:12.5px;color:#fff">96%</div>
<svg class="a" style="left:1482px;top:1048px" width="17" height="10" viewBox="0 0 17 10"><path d="M1 9L8.5 1.5L16 9" stroke="#fff" stroke-width="1.5" fill="none"/></svg>
<svg class="a" style="left:1509px;top:1046px" width="22" height="17" viewBox="0 0 22 17"><path d="M3 1V5M6 1V5M2 5H7V8" stroke="#fff" stroke-width="1.3" fill="none"/><rect x="5" y="8" width="15" height="8" fill="none" stroke="#fff" stroke-width="1.3"/><rect x="6.5" y="9.5" width="11" height="5" fill="#fff"/><rect x="20" y="10" width="1.5" height="4" fill="#fff"/></svg>
<svg class="a" style="left:1539px;top:1045px" width="22" height="21" viewBox="0 0 22 21"><rect x="1" y="1" width="4" height="5" fill="none" stroke="#fff" stroke-width="1.2"/><path d="M5 3H21V15H3V6M12 15V19M7 19.5H17" stroke="#fff" stroke-width="1.3" fill="none"/></svg>
<svg class="a" style="left:1569px;top:1045px" width="22" height="20" viewBox="0 0 22 20"><path d="M2 7H6L11 2V18L6 13H2Z" fill="none" stroke="#fff" stroke-width="1.3"/><path d="M14 7Q16 10 14 13M16.5 5Q20 10 16.5 15M19 3Q24 10 19 17" stroke="#fff" stroke-width="1.3" fill="none"/></svg>
<div class="t" style="left:1599px;top:1044px;font-size:20px;color:#fff">中</div>
<svg class="a" style="left:1634px;top:1043px" width="22" height="22" viewBox="0 0 22 22"><path d="M4 2L20 1L21 18L5 21Q2 21 2 18Z" fill="#e8572a"/><text x="5.5" y="17" font-size="15" font-weight="bold" font-family="Liberation Sans" fill="#fff">S</text></svg>
<div class="t" style="left:1703px;top:1035px;font-size:15px;color:#fff">15:14:55 星期三</div>
<div class="t" style="left:1675px;top:1058px;font-size:15px;color:#fff">2025年1月15日 腊月十六</div>
<svg class="a" style="left:1868px;top:1044px" width="23" height="22" viewBox="0 0 23 22"><path d="M1 1H22V16H14L11 20L8 16H1Z" fill="none" stroke="#fff" stroke-width="1.4"/></svg>
<div class="a" style="left:1914px;top:1030px;width:1px;height:50px;background:#5a5a5a"></div>
</body></html>
